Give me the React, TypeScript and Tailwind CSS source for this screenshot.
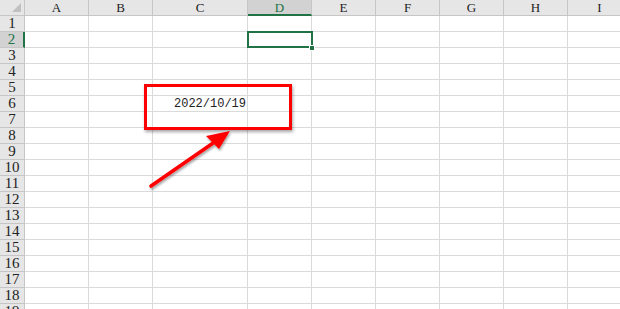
import React from "react";

const cols = [
  { l: "A", w: 64 },
  { l: "B", w: 64 },
  { l: "C", w: 95 },
  { l: "D", w: 64 },
  { l: "E", w: 64 },
  { l: "F", w: 64 },
  { l: "G", w: 64 },
  { l: "H", w: 64 },
  { l: "I", w: 64 },
];

const rows = Array.from({ length: 19 }, (_, i) => i + 1);

export default function App() {
  const template = `25px ${cols.map((c) => c.w + "px").join(" ")}`;
  return (
    <div className="relative w-[620px] h-[309px] overflow-hidden bg-white">
      <div
        className="grid"
        style={{ gridTemplateColumns: template, gridAutoRows: "16px" }}
      >
        {/* header row */}
        <div className="relative bg-[#e6e6e6] border-r border-b border-[#c6c6c6]">
          <svg className="absolute right-[3px] bottom-[3px]" width="9" height="9" viewBox="0 0 9 9">
            <polygon points="9,0 9,9 0,9" fill="#c0c0c0" />
          </svg>
        </div>
        {cols.map((c) =>
          c.l === "D" ? (
            <div
              key={c.l}
              className="flex items-center justify-center bg-[#d2d2d2] border-r border-[#c6c6c6] border-b-2 border-b-[#217346] text-[#217346] text-[13px] leading-none pt-[1px] font-['Liberation_Serif',serif]"
            >
              {c.l}
            </div>
          ) : (
            <div
              key={c.l}
              className="flex items-center justify-center bg-[#e6e6e6] border-r border-b border-[#c6c6c6] text-[#222] text-[13px] leading-none font-['Liberation_Serif',serif]"
            >
              {c.l}
            </div>
          )
        )}
        {rows.map((r) => (
          <React.Fragment key={r}>
            {r === 2 ? (
              <div className="flex items-center justify-center bg-[#d2d2d2] border-b border-[#c6c6c6] border-r-2 border-r-[#217346] text-[#217346] text-[15px] leading-none font-['Liberation_Serif',serif]">
                {r}
              </div>
            ) : (
              <div className="flex items-center justify-center bg-[#e6e6e6] border-r border-b border-[#c6c6c6] text-[#222] text-[15px] leading-none font-['Liberation_Serif',serif]">
                {r}
              </div>
            )}
            {cols.map((c) => (
              <div
                key={c.l}
                className="flex items-end justify-end pr-[1px] pb-[1px] border-r border-b border-[#dadada] text-[12px] leading-none text-[#222] font-['Liberation_Mono',monospace]"
              >
                {r === 6 && c.l === "C" ? "2022/10/19" : ""}
              </div>
            ))}
          </React.Fragment>
        ))}
      </div>

      {/* selected cell D2 */}
      <div className="absolute left-[247px] top-[31px] w-[66px] h-[17px] border-2 border-[#217346]" />
      <div className="absolute left-[309px] top-[45px] w-[6px] h-[6px] bg-[#217346] border border-white" />

      {/* red annotation box */}
      <div className="absolute left-[144px] top-[84px] w-[148px] h-[46px] border-[3px] border-[#ff0000] shadow-[1px_2px_3px_rgba(0,0,0,0.35)]" />

      {/* arrow */}
      <svg className="absolute left-0 top-0" width="620" height="309" viewBox="0 0 620 309">
        <defs>
          <filter id="sh" x="-20%" y="-20%" width="140%" height="140%">
            <feDropShadow dx="1" dy="2" stdDeviation="1.2" floodColor="#000" floodOpacity="0.35" />
          </filter>
        </defs>
        <g filter="url(#sh)">
          <line x1="151" y1="186" x2="216" y2="141" stroke="#ff0000" strokeWidth="3.6" strokeLinecap="round" />
          <polygon points="230,131 206,136 219,149" fill="#ff0000" />
        </g>
      </svg>
    </div>
  );
}
